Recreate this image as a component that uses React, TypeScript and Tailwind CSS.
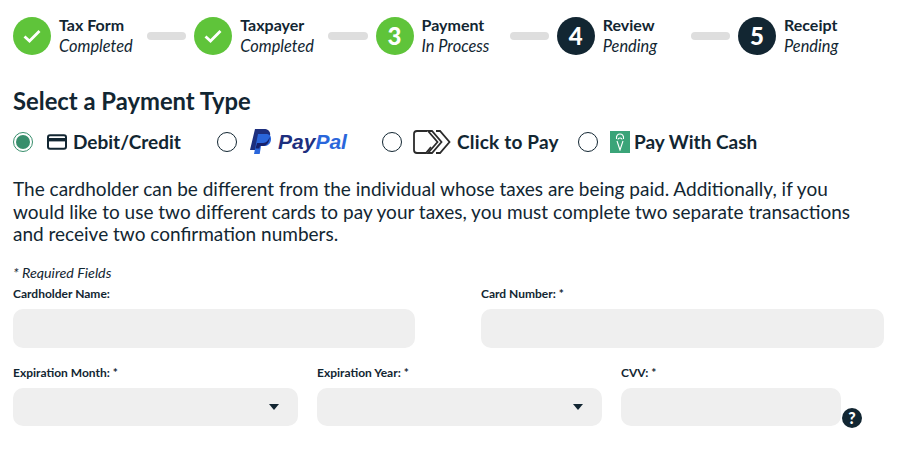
import React from "react";

const font = "font-['Lato','Noto_Sans',sans-serif]";

function Step({ label, status, n, done, dark }: { label: string; status: string; n?: string; done?: boolean; dark?: boolean }) {
  return (
    <div className="flex w-[134px] shrink-0 items-center gap-2">
      <div className={`flex h-[38px] w-[38px] shrink-0 items-center justify-center rounded-full text-[24px] font-black text-white ${dark ? "bg-[#122632]" : "bg-[#5fc43a]"}`}>
        {done ? (
          <svg width="20" height="16" viewBox="0 0 20 16" fill="none">
            <path d="M2.5 8.5 L7.5 13 L17.5 3" stroke="#fff" strokeWidth="2.8" />
          </svg>
        ) : (
          n
        )}
      </div>
      <div className="-mt-[2px] flex flex-col text-[#122632]">
        <span className="text-[16px] leading-[21px] font-bold">{label}</span>
        <span className="text-[16.4px] leading-[21px] italic">{status}</span>
      </div>
    </div>
  );
}

function Bar() {
  return <div className="mr-2 h-2 flex-1 rounded-full bg-[#dedede]" />;
}

function Radio({ checked }: { checked?: boolean }) {
  return (
    <span className={`flex h-5 w-5 shrink-0 items-center justify-center rounded-full border ${checked ? "border-[#388e6c]" : "border-[#122632]"}`}>
      {checked && <span className="h-[14px] w-[14px] rounded-full bg-[#388e6c]" />}
    </span>
  );
}

function Field({ label, children }: { label: string; children?: React.ReactNode }) {
  return (
    <div className="flex flex-col">
      <label className="mb-[7px] text-[12px] leading-4 font-bold text-[#122632]">{label}</label>
      {children}
    </div>
  );
}

function Select() {
  return (
    <div className="flex h-[38px] items-center justify-end rounded-[10px] bg-[#efefef] pr-[19px]">
      <svg width="10" height="6" viewBox="0 0 10 6"><path d="M0 0h10L5 6z" fill="#122632" /></svg>
    </div>
  );
}

export default function App() {
  return (
    <div className={`${font} h-[456px] w-[899px] overflow-hidden bg-white px-[13px] pt-4 text-[#122632]`}>
      <div className="flex items-center pr-[14px]">
        <Step label="Tax Form" status="Completed" done />
        <Bar />
        <Step label="Taxpayer" status="Completed" done />
        <Bar />
        <Step label="Payment" status="In Process" n="3" />
        <Bar />
        <Step label="Review" status="Pending" n="4" dark />
        <Bar />
        <Step label="Receipt" status="Pending" n="5" dark />
      </div>

      <h2 className="mt-[31px] text-[23.8px] leading-7 font-bold">Select a Payment Type</h2>

      <div className="mt-[13px] flex h-7 items-center text-[19px] font-bold">
        <div className="flex w-[204px] items-center">
          <Radio checked />
          <svg className="ml-[14px]" width="20" height="16" viewBox="0 0 20 16" fill="none">
            <rect x="1" y="1.2" width="18" height="13.6" rx="2" stroke="#122632" strokeWidth="2" />
            <rect x="1" y="4" width="18" height="3.4" fill="#122632" />
          </svg>
          <span className="ml-[6px]">Debit/Credit</span>
        </div>
        <div className="flex w-[165px] items-center">
          <Radio />
          <svg className="ml-[13px]" width="22" height="26" viewBox="0 0 22 26">
            <path d="M5 0h9c4 0 7 2.500 6 7-1 5-4 7-8 7H8L6.500 21H0z" fill="#1d2f7e" />
            <path d="M8 5h8c3.500 0 5.500 2 5 6-.7 4-3.500 6-7 6h-3l-1.300 8H4z" fill="#2a66db" />
            <path d="M7 14h5c3 0 6-1 7.500-6 .7 3-2 9-6.500 9h-3l-.6 2.500H5.500z" fill="#16206b" />
          </svg>
          <span className="ml-[6px] font-['Liberation_Sans',sans-serif] text-[21px] italic">
            <span className="text-[#1d2f7e]">Pay</span>
            <span className="text-[#2a66db]">Pal</span>
          </span>
        </div>
        <div className="flex w-[196px] items-center">
          <Radio />
          <svg className="ml-[11px]" width="38" height="24" viewBox="0 0 38 24" fill="none" stroke="#2b2b2b" strokeWidth="1.8">
            <path d="M14 1H4a3 3 0 0 0-3 3v16a3 3 0 0 0 3 3h9l5-6" />
            <path d="M15 1h4l9.500 11L19 23h-4l9.500-11z" />
            <path d="M23 1h4l9.500 11L27 23h-4" />
          </svg>
          <span className="ml-[6px] tracking-[0.2px]">Click to Pay</span>
        </div>
        <div className="flex items-center">
          <Radio />
          <div className="ml-[12px] flex h-[22px] w-5 items-center justify-center bg-[#3aa478]">
            <svg width="10" height="18" viewBox="0 0 10 18" fill="none" stroke="#fff" strokeWidth="1.1">
              <path d="M1.500 6 C1 2.500 3 1 5 1s4 1.500 3.500 5" />
              <path d="M3 6.500c0-2 4-2 4 0" />
              <path d="M2 8l3 9 3-9" />
            </svg>
          </div>
          <span className="ml-[4px]">Pay With Cash</span>
        </div>
      </div>

      <p className="mt-[22px] w-[845px] text-[19px] leading-[22.5px]">
        The cardholder can be different from the individual whose taxes are being paid. Additionally, if you would like to use two different cards to pay your taxes, you must complete two separate transactions and receive two confirmation numbers.
      </p>

      <p className="mt-[18px] text-[14.3px] leading-[18px] italic">* Required Fields</p>

      <div className="mt-1 grid w-[871px] grid-cols-[402px_403px] gap-x-[66px]">
        <Field label="Cardholder Name:">
          <div className="h-[39px] rounded-[10px] bg-[#efefef]" />
        </Field>
        <Field label="Card Number: *">
          <div className="h-[39px] rounded-[10px] bg-[#efefef]" />
        </Field>
      </div>

      <div className="mt-[17px] grid grid-cols-[285px_285px_1fr] gap-x-[19px]">
        <Field label="Expiration Month: *"><Select /></Field>
        <Field label="Expiration Year: *"><Select /></Field>
        <Field label="CVV: *">
          <div className="flex items-end">
            <div className="h-[38px] w-[220px] rounded-[10px] bg-[#efefef]" />
            <span className="-mb-[2px] ml-px flex h-5 w-5 items-center justify-center rounded-full bg-[#122632] text-[16px] leading-none font-black text-white">?</span>
          </div>
        </Field>
      </div>
    </div>
  );
}
